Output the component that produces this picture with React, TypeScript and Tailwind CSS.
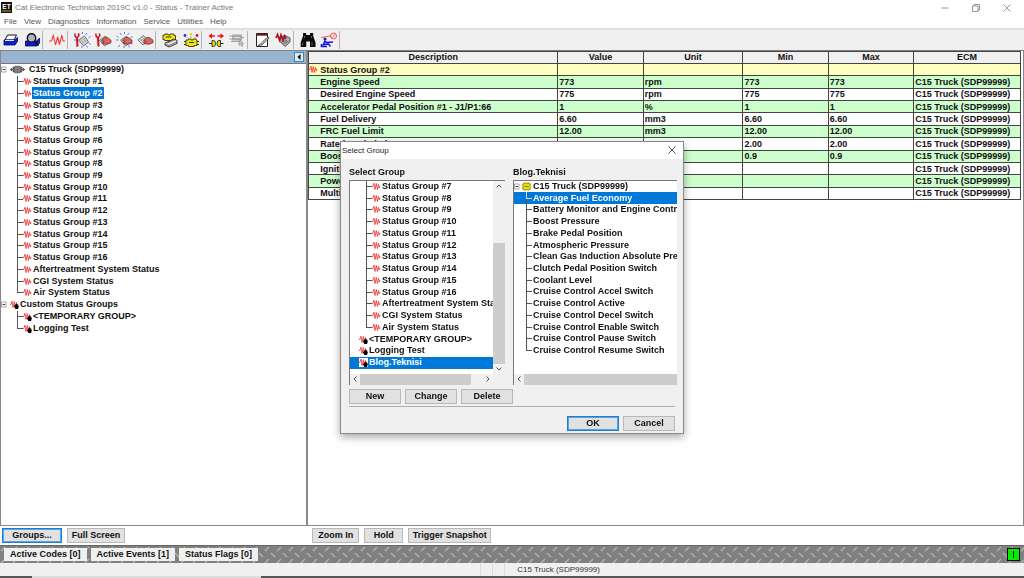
import { useState } from "react";
import type { ReactNode } from "react";
import clsx from "clsx";

const statusGroups = [
  ...Array.from({ length: 16 }, (_, i) => `Status Group #${i + 1}`),
  "Aftertreatment System Status",
  "CGI System Status",
  "Air System Status",
];

const customGroups = ["<TEMPORARY GROUP>", "Logging Test"];

const parameters = [
  "Average Fuel Economy",
  "Battery Monitor and Engine Control",
  "Boost Pressure",
  "Brake Pedal Position",
  "Atmospheric Pressure",
  "Clean Gas Induction Absolute Pressure",
  "Clutch Pedal Position Switch",
  "Coolant Level",
  "Cruise Control Accel Switch",
  "Cruise Control Active",
  "Cruise Control Decel Switch",
  "Cruise Control Enable Switch",
  "Cruise Control Pause Switch",
  "Cruise Control Resume Switch",
];

const statusRows = [
  { name: "Engine Speed", value: "773", unit: "rpm", min: "773", max: "773" },
  { name: "Desired Engine Speed", value: "775", unit: "rpm", min: "775", max: "775" },
  { name: "Accelerator Pedal Position #1 - J1/P1:66", value: "1", unit: "%", min: "1", max: "1" },
  { name: "Fuel Delivery", value: "6.60", unit: "mm3", min: "6.60", max: "6.60" },
  { name: "FRC Fuel Limit", value: "12.00", unit: "mm3", min: "12.00", max: "12.00" },
  { name: "Rated Fuel Limit", value: "2.00", unit: "mm3", min: "2.00", max: "2.00" },
  { name: "Boost Pressure", value: "0.9", unit: "psi", min: "0.9", max: "0.9" },
  { name: "Ignition Timing", value: "", unit: "", min: "", max: "" },
  { name: "Power Mode", value: "", unit: "", min: "", max: "" },
  { name: "Multiple Injection", value: "", unit: "", min: "", max: "" },
];

/* ---------- icons ---------- */

function Pulse({ dot = false, boxed = false }: { dot?: boolean; boxed?: boolean }) {
  return (
    <svg viewBox="0 0 9 9" className={clsx("h-[9px] w-[9px] shrink-0", boxed && "bg-white")} aria-hidden="true">
      <path
        d="M0 4.500h.8L2 1.200l1 6.300L4.300 1.500l1.100 6L6.500 2.500 7.300 6l.4-1.500h.6"
        fill="none"
        stroke="#f22a2a"
        strokeWidth=".8"
      />
      {dot && <path d="M6.300 3.500l2.600 2.400-.9 3H5.400L3.900 6.200z" fill="#000" />}
    </svg>
  );
}

function Engine() {
  return (
    <svg viewBox="0 0 15 9" className="h-[9px] w-[15px] shrink-0" aria-hidden="true">
      <path d="M0 4.500h15M1.500 3v3M13.500 3v3" stroke="#555" strokeWidth="1" />
      <path d="M3 2h2V1.200h5V2h2v5h-2v.8H5V7H3z" fill="#707070" stroke="#3a3a3a" strokeWidth=".6" />
      <path d="M6 1.500v6M9 1.500v6" stroke="#a5a5a5" strokeWidth=".7" />
    </svg>
  );
}

function Ecm() {
  return (
    <svg viewBox="0 0 9 9" className="h-[9px] w-[9px] shrink-0" aria-hidden="true">
      <path d="M1 1.500h1.500V.7h1v.8h2V.7h1v.8H8v6H6.500v.8h-1v-.8h-2v.8h-1v-.8H1z" fill="#ece400" stroke="#8a8400" strokeWidth=".7" />
      <path d="M2.500 4.500h4M0 3h1M0 6h1M8 3h1M8 6h1" stroke="#6a6600" strokeWidth=".8" />
    </svg>
  );
}

function Expander() {
  return (
    <svg viewBox="0 0 6 7" className="h-[7px] w-[6px] shrink-0" aria-hidden="true">
      <rect x=".5" y="1" width="4.500" height="5" fill="#fff" stroke="#888" strokeWidth=".7" />
      <path d="M1.500 3.500h2.600" stroke="#111" strokeWidth=".8" />
    </svg>
  );
}

function Icon({ children }: { children: ReactNode }) {
  return (
    <svg viewBox="0 0 18 16" className="h-4 w-[18px]" fill="none" aria-hidden="true">
      {children}
    </svg>
  );
}

const wrench = (
  <g stroke="#d01420">
    <path d="M1.800 1.500l.4 3 1.800 1.200L5.800 4l-.3-2.500" strokeWidth="1.500" />
    <path d="M4 5.500l.5 9" strokeWidth="2" />
  </g>
);
const page = (
  <g>
    <path d="M5.500 8l6-4 4 6-5 4z" fill="#e2e2e2" stroke="#555" strokeWidth=".8" />
    <path d="M7 9.500l6-4M8.500 11.500l6-4M7.500 7l4.500 6M9.500 5.500l4.500 6" stroke="#8a8a8a" strokeWidth=".6" />
  </g>
);
const smallPage = (
  <g>
    <path d="M2 8l5.500-4.500L12 9l-5 4z" fill="#e2e2e2" stroke="#555" strokeWidth=".8" />
    <path d="M3.500 9.500l5.500-4M5 11.500l5.500-4M4 6.500l4.500 5.500M6 5l4.500 5.500" stroke="#8a8a8a" strokeWidth=".6" />
  </g>
);
const hand = (
  <path
    d="M7.500 8.500l3.200-3 3 .2 3.300 2.500v2.500l-4 1.600-4.500-.6-.8-1.300 2.500-.8z"
    fill="#d9665c"
    stroke="#5c2020"
    strokeWidth=".7"
  />
);
const rays = (
  <path
    d="M5 1l1.500 2M9.500 0v2M14 1l-1.500 2M17.500 4.500l-2 1M17.500 12l-2-1M14.500 15.500l-1-2M9 16v-2M3 15l2-2M1 8h2.500M1.500 4l2 1.500"
    stroke="#5a64ea"
    strokeWidth=".9"
  />
);

const toolGroups: { label: string; icon: ReactNode }[][] = [
  [
    {
      label: "Print",
      icon: (
        <Icon>
          <path d="M5.500 3h9l-2.500 5H3z" fill="#fff" stroke="#111" />
          <path d="M2 8h10.500L15.500 5.500v4L13 13H2z" fill="#0a1fd0" stroke="#050a50" strokeWidth=".8" />
          <path d="M3 8.500h9" stroke="#dfe4ff" />
        </Icon>
      ),
    },
    {
      label: "Print Preview",
      icon: (
        <Icon>
          <path d="M2.500 9h11l3-3v5L14 14H2.500z" fill="#0a1fd0" stroke="#050a50" strokeWidth=".8" />
          <circle cx="8.500" cy="6" r="4.200" fill="#aeb4bd" stroke="#111" strokeWidth="1.400" />
          <path d="M11.500 9l4 4.500" stroke="#111" strokeWidth="1.800" />
        </Icon>
      ),
    },
  ],
  [
    {
      label: "Status",
      icon: (
        <Icon>
          <path d="M1 9h2.500l1.800-5.500L7.500 13l2.200-8 1.800 7.500L13.800 3l1.400 6H17" stroke="#f23a3a" strokeWidth="1.100" />
        </Icon>
      ),
    },
  ],
  [
    { label: "Active Diagnostic Codes", icon: <Icon>{rays}{page}{wrench}</Icon> },
    { label: "Logged Diagnostic Codes", icon: <Icon>{page}{wrench}{hand}</Icon> },
    { label: "Active Events", icon: <Icon>{rays}{page}{hand}</Icon> },
    { label: "Logged Events", icon: <Icon>{smallPage}{hand}</Icon> },
  ],
  [
    {
      label: "Configuration",
      icon: (
        <Icon>
          <path d="M2 3h2V2h3v1h2V2h4v1.500h1.500v4H12v1H3.500v-1H2z" fill="#f1e616" stroke="#3c3900" strokeWidth=".9" />
          <path d="M4.500 5h6" stroke="#3c3900" />
          <path d="M4 11l9-4 3 1.500v3L8 15l-4-2z" fill="#e4e4e4" stroke="#222" strokeWidth=".9" />
          <path d="M4.500 12.500l3.500 1 8-3.500M6 11l8-3.200" stroke="#444" strokeWidth=".7" />
        </Icon>
      ),
    },
    {
      label: "ECM Summary",
      icon: (
        <Icon>
          <path d="M4 8h2.500V7H9v1h2V7h3v1h1v5.500h-3v1H6.500v-1H4z" fill="#f1e616" stroke="#3c3900" strokeWidth=".9" />
          <path d="M7 10.500h5M2 9.500h2M15 9.500h2M2 12.500h2M15 12.500h2" stroke="#3c3900" />
          <circle cx="3" cy="3.500" r="1.400" fill="#1a34e0" />
          <circle cx="9" cy="2.300" r="1.400" fill="#f0d800" />
          <circle cx="15" cy="3.500" r="1.400" fill="#e01a1a" />
          <path d="M4.500 5l1.500 1.500M9 4.200v2M13.500 5L12 6.500" stroke="#888" strokeWidth=".8" />
        </Icon>
      ),
    },
  ],
  [
    {
      label: "Connect",
      icon: (
        <Icon>
          <path d="M1.500 4L5 1.200v2h3v1.600H5v2zM17 4l-3.500-2.800v2h-3v1.600h3v2z" fill="#e81414" />
          <path d="M5 8.500h1.500q2 0 2 3t-2 3H5zM13.500 8.500H12q-2 0-2 3t2 3h1.500z" fill="#eae014" stroke="#222" strokeWidth=".9" />
          <path d="M2 11.500h3M13.500 11.500h3" stroke="#222" />
        </Icon>
      ),
    },
    {
      label: "Load ECM",
      icon: (
        <Icon>
          <path d="M4 2.500h10v6H4z" fill="#a9a9a9" />
          <path d="M1.500 4H4M1.500 7H4M3 9.500h8M14 5.500h2" stroke="#a0a0a0" strokeWidth="1.200" />
          <path d="M6 5.500h6" stroke="#ddd" />
          <path d="M11 7v6.500l1.500-1.300 1.300 2.300 1-.6-1.200-2.200h2z" fill="#c4c4c4" stroke="#909090" strokeWidth=".7" />
        </Icon>
      ),
    },
  ],
  [
    {
      label: "Work Order",
      icon: (
        <Icon>
          <path d="M3.500 1.500h11v13h-11z" fill="#fff" stroke="#222" />
          <path d="M3.500 2.800h11" stroke="#701818" strokeWidth="1.800" />
          <path d="M5 13.500q3-1 4.500-3.500T15.500 5l.5 1.500q-4 2-5 4.500T5 13.500z" fill="#ccc" stroke="#444" strokeWidth=".8" />
        </Icon>
      ),
    },
    {
      label: "Data Log",
      icon: (
        <Icon>
          <path d="M6 5l5-1.500L16 6v4l-5 4.500-5-5z" fill="#b4b4b4" stroke="#444" strokeWidth=".9" />
          <path d="M2 6l1.500-3.500L5.500 8 7 3l2 5.500L10.500 4l1.500 3" stroke="#a81420" strokeWidth="1.700" />
          <path d="M7.500 10l5.500-1.500M9.500 12l5-3" stroke="#555" strokeWidth=".8" />
        </Icon>
      ),
    },
  ],
  [
    {
      label: "Find",
      icon: (
        <Icon>
          <path d="M4 1h3.200v2H11V1h3.200v3l2.300 6.500V15H11v-5.500H7.200V15H1.700v-4.500L4 4z" fill="#0c0c0c" />
          <path d="M3.700 10.500v3M13 10.500v3M5.500 4v2M12.500 4v2" stroke="#8a8a8a" strokeWidth=".7" />
        </Icon>
      ),
    },
    {
      label: "Disconnect",
      icon: (
        <Icon>
          <circle cx="13.500" cy="4" r="3" stroke="#f25050" />
          <path d="M11.500 6l4-4M1 5.500L10.500 4" stroke="#f25050" strokeWidth=".9" />
          <circle cx="5" cy="7" r="1.500" fill="#1212e8" />
          <path d="M4 9l3 1.500 6-.5M5 9l-1.500 3.500 5-.5 2 2.500M1.500 12v2.500H7" stroke="#1212e8" strokeWidth="1.600" />
        </Icon>
      ),
    },
  ],
];

function DiamondPlate() {
  return (
    <svg className="absolute inset-0 h-full w-full" aria-hidden="true">
      <defs>
        <pattern id="plate" width="12" height="12" patternUnits="userSpaceOnUse">
          <rect width="12" height="12" fill="#808080" />
          <path d="M1 5l4-4M7 7l4 4" stroke="#b2b2b2" strokeWidth="1.400" />
        </pattern>
      </defs>
      <rect width="100%" height="100%" fill="url(#plate)" />
    </svg>
  );
}

/* ---------- tree ---------- */

function Branch({ last = false, light = false }: { last?: boolean; light?: boolean }) {
  return (
    <span className="flex w-[6px] shrink-0 flex-col self-stretch">
      <span className={clsx("flex-1 border-b border-l", light ? "border-gray-300" : "border-[#555]")} />
      <span className={clsx("flex-1", !last && "border-l border-[#555]")} />
    </span>
  );
}

function TreeItem({
  label,
  icon,
  indent,
  branch,
  selected = false,
  fill = false,
  onSelect,
}: {
  label: string;
  icon?: ReactNode;
  indent: string;
  branch?: "mid" | "last";
  selected?: boolean;
  fill?: boolean;
  onSelect?: () => void;
}) {
  return (
    <li className={clsx("flex min-h-0 items-center", indent, selected && fill && "bg-[#0078d7]")}>
      {branch && <Branch last={branch === "last"} light={selected && fill} />}
      {icon}
      <button
        type="button"
        onClick={onSelect}
        className={clsx(
          "flex items-center self-stretch whitespace-nowrap px-px",
          selected ? "bg-[#0078d7] text-white" : "text-[#101010]",
        )}
      >
        {label}
      </button>
    </li>
  );
}

function Button({
  children,
  primary = false,
  className,
  onClick,
}: {
  children: ReactNode;
  primary?: boolean;
  className?: string;
  onClick?: () => void;
}) {
  return (
    <button
      type="button"
      onClick={onClick}
      className={clsx(
        "flex h-[15px] items-center justify-center whitespace-nowrap border bg-[#e1e1e1]",
        primary ? "border-[#1a7fd4] ring-1 ring-inset ring-[#5aa5e0]" : "border-[#b8b8b8]",
        className,
      )}
    >
      {children}
    </button>
  );
}

function Chevron({ d }: { d: string }) {
  return (
    <svg viewBox="0 0 10 10" className="h-[10px] w-[10px] shrink-0" aria-hidden="true">
      <path d={d} fill="none" stroke="#505050" strokeWidth="1" />
    </svg>
  );
}

function CaptionIcon({ d }: { d: string }) {
  return (
    <svg viewBox="0 0 10 10" className="h-[10px] w-[10px] shrink-0" aria-hidden="true">
      <path d={d} fill="none" stroke="#8a8a8a" strokeWidth=".9" />
    </svg>
  );
}

/* ---------- dialog ---------- */

function SelectGroupDialog({ onClose }: { onClose: () => void }) {
  const [group, setGroup] = useState("Blog.Teknisi");
  const [parameter, setParameter] = useState(parameters[0]);

  return (
    <div className="fixed inset-0 flex items-center justify-center pb-1">
      <div
        role="dialog"
        aria-labelledby="dialog-title"
        className="w-[344px] border border-[#8a8a8a] bg-[#f0f0f0] shadow-[0_3px_8px_rgba(0,0,0,0.35)]"
      >
        <div className="flex h-[17px] items-center justify-between bg-white pl-px pr-[6px]">
          <h2 id="dialog-title" className="font-['Liberation_Sans',sans-serif] text-[8px] font-normal text-[#222]">
            Select Group
          </h2>
          <button type="button" aria-label="Close" onClick={onClose}>
            <Chevron d="M1.500 1.500l7 7M8.500 1.500l-7 7" />
          </button>
        </div>

        <div className="grid grid-cols-[156px_164px] gap-x-2 px-2 pt-[7px]">
          <h3 className="flex h-[14px] items-center">Select Group</h3>
          <h3 className="flex h-[14px] items-center">Blog.Teknisi</h3>

          <div className="flex h-[205px] flex-col border-l border-t border-[#777] bg-white">
            <div className="flex min-h-0 flex-1">
              <ul className="grid h-[188px] min-w-0 flex-1 auto-rows-fr overflow-hidden">
                {statusGroups.slice(6).map((name, i, all) => (
                  <TreeItem
                    key={name}
                    label={name}
                    icon={<Pulse />}
                    indent="pl-4"
                    branch={i === all.length - 1 ? "last" : "mid"}
                    selected={group === name}
                    onSelect={() => setGroup(name)}
                  />
                ))}
                {[...customGroups, "Blog.Teknisi"].map((name) => (
                  <TreeItem
                    key={name}
                    label={name}
                    icon={<Pulse dot boxed={group === name} />}
                    indent="pl-[9px]"
                    selected={group === name}
                    fill
                    onSelect={() => setGroup(name)}
                  />
                ))}
              </ul>
              <div className="flex w-3 flex-col items-center bg-[#f0f0f0]">
                <Chevron d="M2.500 6.500L5 4l2.500 2.500" />
                <div className="mt-[52px] w-full flex-1 bg-[#cdcdcd]" />
                <Chevron d="M2.500 3.500L5 6l2.500-2.500" />
              </div>
            </div>
            <div className="flex h-[11px] items-center bg-[#f0f0f0] pr-3">
              <Chevron d="M6.500 2.500L4 5l2.500 2.500" />
              <div className="mr-3 h-full flex-1 bg-[#cdcdcd]" />
              <Chevron d="M3.500 2.500L6 5 3.500 7.500" />
            </div>
          </div>

          <div className="flex h-[205px] flex-col border-l border-t border-[#777] bg-white">
            <ul className="grid h-[176px] auto-rows-fr overflow-hidden">
              <TreeItem
                label="C15 Truck (SDP99999)"
                icon={
                  <span className="flex items-center gap-[2px] pr-px">
                    <Expander />
                    <Ecm />
                  </span>
                }
                indent="pl-0"
              />
              {parameters.map((name, i) => (
                <TreeItem
                  key={name}
                  label={name}
                  indent="pl-3"
                  branch={i === parameters.length - 1 ? "last" : "mid"}
                  selected={parameter === name}
                  fill
                  onSelect={() => setParameter(name)}
                />
              ))}
            </ul>
            <div className="mt-auto flex h-[11px] items-center bg-[#f0f0f0]">
              <Chevron d="M6.500 2.500L4 5l2.500 2.500" />
              <div className="h-full flex-1 bg-[#cdcdcd]" />
            </div>
          </div>
        </div>

        <div className="mx-2 flex gap-1 border-b border-[#b0b0b0] pb-[2px] pt-1">
          <Button className="w-[52px]">New</Button>
          <Button className="w-[52px]">Change</Button>
          <Button className="w-[52px]">Delete</Button>
        </div>

        <div className="flex justify-end gap-1 px-2 pb-[2px] pt-[9px]">
          <Button primary className="w-[52px]" onClick={onClose}>
            OK
          </Button>
          <Button className="w-[52px]" onClick={onClose}>
            Cancel
          </Button>
        </div>
      </div>
    </div>
  );
}

/* ---------- page ---------- */

function StatusTable() {
  const cell = "border border-[#444] p-0 pl-px leading-[10px]";
  return (
    <table className="h-[149px] w-full table-fixed border-collapse whitespace-nowrap text-left">
      <colgroup>
        <col className="w-[35%]" />
        <col className="w-[12%]" />
        <col className="w-[14%]" />
        <col className="w-[12%]" />
        <col className="w-[12%]" />
        <col className="w-[15%]" />
      </colgroup>
      <thead>
        <tr className="bg-[#f0f0f0]">
          {["Description", "Value", "Unit", "Min", "Max", "ECM"].map((h) => (
            <th key={h} className="border border-[#444] p-0 text-center leading-[11px]">
              {h}
            </th>
          ))}
        </tr>
      </thead>
      <tbody>
        <tr className="bg-[#ffffc0]">
          <td className="border border-[#444] p-0 leading-[10px]">
            <span className="flex items-center gap-[2px]">
              <Pulse />
              Status Group #2
            </span>
          </td>
          {[0, 1, 2, 3, 4].map((n) => (
            <td key={n} className={cell} />
          ))}
        </tr>
        {statusRows.map((row) => (
          <tr key={row.name} className="odd:bg-white even:bg-[#ccffcc]">
            <td className="border border-[#444] p-0 pl-[11px] leading-[10px]">{row.name}</td>
            <td className={cell}>{row.value}</td>
            <td className={cell}>{row.unit}</td>
            <td className={cell}>{row.min}</td>
            <td className={cell}>{row.max}</td>
            <td className={cell}>C15 Truck (SDP99999)</td>
          </tr>
        ))}
      </tbody>
    </table>
  );
}

export default function App() {
  const [group, setGroup] = useState("Status Group #2");
  const [dialogOpen, setDialogOpen] = useState(true);

  return (
    <div className="flex h-screen flex-col overflow-hidden bg-white font-['Liberation_Sans',sans-serif] text-[9px] font-bold leading-[11px] text-[#101010]">
      <header className="text-[8px] font-normal">
        <div className="flex h-[15px] items-center text-[#777]">
          <svg viewBox="0 0 11 11" className="mx-px h-[11px] w-[11px]" aria-hidden="true">
            <rect width="11" height="11" fill="#101010" />
            <text x="5.500" y="7" textAnchor="middle" fontSize="6.500" fontWeight="700" fill="#fff">
              ET
            </text>
            <path d="M1 9h9" stroke="#c9a227" />
          </svg>
          <h1 className="ml-[2px] flex-1">Cat Electronic Technician 2019C v1.0 - Status - Trainer Active</h1>
          <div className="flex gap-[21px] pr-3">
            <button type="button" aria-label="Minimize">
              <CaptionIcon d="M1.500 5h7" />
            </button>
            <button type="button" aria-label="Restore">
              <CaptionIcon d="M1.500 3h5.500v5.500H1.500zM3 3V1.500h5.500V7H7" />
            </button>
            <button type="button" aria-label="Close window">
              <CaptionIcon d="M1.500 1.500l7 7M8.500 1.500l-7 7" />
            </button>
          </div>
        </div>
        <nav className="flex h-[13px] items-center gap-[7px] px-1 text-[#555]">
          {["File", "View", "Diagnostics", "Information", "Service", "Utilities", "Help"].map((m) => (
            <button key={m} type="button">
              {m}
            </button>
          ))}
        </nav>
      </header>

      <div className="flex h-[23px] items-center border-b border-t-2 border-b-[#808080] border-t-[#e0e0e0] bg-[#f0f0f0]">
        {toolGroups.map((tools, i) => (
          <div key={i} className="flex items-center">
            {tools.map((tool) => (
              <button
                key={tool.label}
                type="button"
                aria-label={tool.label}
                className="flex h-[18px] w-[21px] items-center justify-center"
              >
                {tool.icon}
              </button>
            ))}
            <span className="mr-[3px] h-[18px] border-l border-[#b4b4b4]" />
          </div>
        ))}
      </div>

      <main className="flex min-h-0 flex-1">
        <section className="flex w-[30%] flex-col border-l border-r border-[#888]">
          <div className="flex h-[13px] items-center justify-end border-b border-[#777] bg-[#99b4d1] pr-[2px]">
            <button type="button" aria-label="Collapse panel" className="flex border border-[#2b88d8] bg-[#e8e8e8]">
              <svg viewBox="0 0 8 8" className="h-2 w-2" aria-hidden="true">
                <path d="M5.500 1v6l-3-3z" fill="#000" />
              </svg>
            </button>
          </div>
          <ul className="grid h-[270px] auto-rows-fr">
            <TreeItem
              label="C15 Truck (SDP99999)"
              icon={
                <span className="flex items-center gap-[3px] pr-[3px]">
                  <Expander />
                  <Engine />
                </span>
              }
              indent="pl-0"
            />
            {statusGroups.map((name, i) => (
              <TreeItem
                key={name}
                label={name}
                icon={<Pulse />}
                indent="pl-4"
                branch={i === statusGroups.length - 1 ? "last" : "mid"}
                selected={group === name}
                onSelect={() => setGroup(name)}
              />
            ))}
            <TreeItem
              label="Custom Status Groups"
              icon={
                <span className="flex items-center gap-[3px]">
                  <Expander />
                  <Pulse dot />
                </span>
              }
              indent="pl-0"
            />
            {customGroups.map((name, i) => (
              <TreeItem
                key={name}
                label={name}
                icon={<Pulse dot />}
                indent="pl-4"
                branch={i === customGroups.length - 1 ? "last" : "mid"}
                selected={group === name}
                onSelect={() => setGroup(name)}
              />
            ))}
          </ul>
        </section>
        <section className="min-w-0 flex-1 border-l border-r border-[#888] pr-[2px]">
          <StatusTable />
        </section>
      </main>

      <div className="flex h-[20px] items-center border-t border-[#888]">
        <div className="flex w-[30%] gap-[5px] pl-[2px]">
          <Button primary className="w-[60px]" onClick={() => setDialogOpen(true)}>
            Groups...
          </Button>
          <Button className="w-[58px]">Full Screen</Button>
        </div>
        <div className="flex gap-[5px] pl-[5px]">
          <Button className="w-[47px]">Zoom In</Button>
          <Button className="w-[39px]">Hold</Button>
          <Button className="w-[83px]">Trigger Snapshot</Button>
        </div>
      </div>

      <div className="relative h-[18px] border-t border-[#666]">
        <DiamondPlate />
        <div className="relative flex h-full items-center gap-1 pl-1 pr-1">
          {["Active Codes [0]", "Active Events [1]", "Status Flags [0]"].map((label) => (
            <button key={label} type="button" className="h-[13px] bg-[#f0f0f0] px-[6px]">
              {label}
            </button>
          ))}
          <div
            role="status"
            aria-label="Communication"
            className="ml-auto flex h-[13px] w-[13px] items-center justify-center border border-black bg-[#00f000]"
          >
            <span className="h-[7px] border-l border-black" />
          </div>
        </div>
      </div>

      <footer className="flex h-[13px] items-center bg-[#f0f0f0] text-[8px] font-normal text-[#333]">
        <span className="h-full w-[47%] border-r border-[#ddd]" />
        <span className="h-full w-3 border-r border-[#ddd]" />
        <span className="h-full w-3 border-r border-[#ddd]" />
        <span className="pl-[12px]">C15 Truck (SDP99999)</span>
      </footer>
      <div className="flex h-[2px] bg-[#555]">
        <span className="ml-8 w-[229px] bg-[#ddd]" />
      </div>

      {dialogOpen && <SelectGroupDialog onClose={() => setDialogOpen(false)} />}
    </div>
  );
}
